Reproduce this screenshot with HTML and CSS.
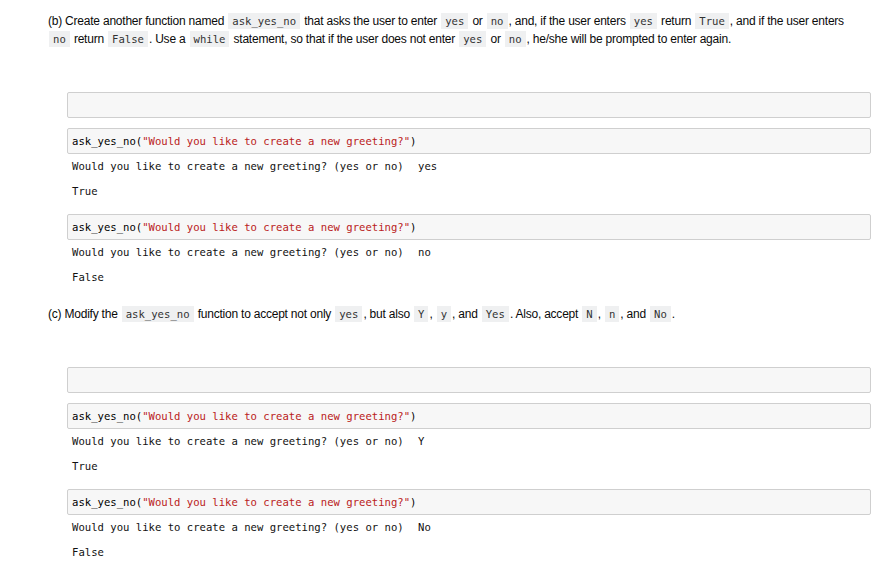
FILE: index.html
```html
<!DOCTYPE html>
<html>
<head>
<meta charset="utf-8">
<link rel="stylesheet" href="styles.css">
</head>
<body>
<div class="notebook">
  <p class="md">(b) Create another function named <code>ask_yes_no</code> that asks the user to enter <code>yes</code> or <code>no</code>, and, if the user enters <code>yes</code> return <code>True</code>, and if the user enters <code>no</code> return <code>False</code>. Use a <code>while</code> statement, so that if the user does not enter <code>yes</code> or <code>no</code>, he/she will be prompted to enter again.</p>

  <div class="cell empty"></div>

  <div class="cell code">ask_yes_no(<span class="str">"Would you like to create a new greeting?"</span>)</div>
  <div class="out">Would you like to create a new greeting? (yes or no) <span class="ans">yes</span></div>
  <div class="out">True</div>

  <div class="cell code">ask_yes_no(<span class="str">"Would you like to create a new greeting?"</span>)</div>
  <div class="out">Would you like to create a new greeting? (yes or no) <span class="ans">no</span></div>
  <div class="out">False</div>

  <p class="md md-c">(c) Modify the <code>ask_yes_no</code> function to accept not only <code>yes</code>, but also <code>Y</code>, <code>y</code>, and <code>Yes</code>. Also, accept <code>N</code>, <code>n</code>, and <code>No</code>.</p>

  <div class="cell empty"></div>

  <div class="cell code">ask_yes_no(<span class="str">"Would you like to create a new greeting?"</span>)</div>
  <div class="out">Would you like to create a new greeting? (yes or no) <span class="ans">Y</span></div>
  <div class="out">True</div>

  <div class="cell code">ask_yes_no(<span class="str">"Would you like to create a new greeting?"</span>)</div>
  <div class="out">Would you like to create a new greeting? (yes or no) <span class="ans">No</span></div>
  <div class="out">False</div>
</div>
</body>
</html>
```
FILE: styles.css
```css
html, body {
  margin: 0;
  padding: 0;
  background: #ffffff;
}

.notebook {
  padding-top: 12px;
  width: 889px;
}

.md {
  margin: 0;
  padding-left: 48px;
  width: 810px;
  font-family: "Liberation Sans", Arial, sans-serif;
  font-size: 12px;
  letter-spacing: -0.22px;
  line-height: 18px;
  color: #0a0a0a;
}

.md code {
  font-family: "DejaVu Sans Mono", monospace;
  font-size: 10.6px;
  letter-spacing: 0;
  background: #eff0f1;
  color: #333333;
  padding: 2px 4px;
  margin: 0 1px;
}

.md-c {
  margin-top: 15px;
}

.cell {
  margin-left: 67px;
  width: 804px;
  border: 1px solid #cfcfcf;
  border-radius: 2px;
  background: #f7f7f7;
  box-sizing: border-box;
  height: 26px;
}

.empty {
  margin-top: 44px;
}

.empty + .code {
  margin-top: 10px;
}

.code {
  margin-top: 10px;
  padding: 0 4px;
  font-family: "DejaVu Sans Mono", monospace;
  font-size: 10.6px;
  line-height: 24px;
  color: #000000;
  white-space: pre;
}

.str {
  color: #ba2121;
}

.out {
  margin-left: 67px;
  padding-left: 5px;
  height: 25px;
  line-height: 24px;
  font-family: "DejaVu Sans Mono", monospace;
  font-size: 10.6px;
  color: #111111;
  white-space: pre;
}

.ans {
  margin-left: 8px;
}
```
